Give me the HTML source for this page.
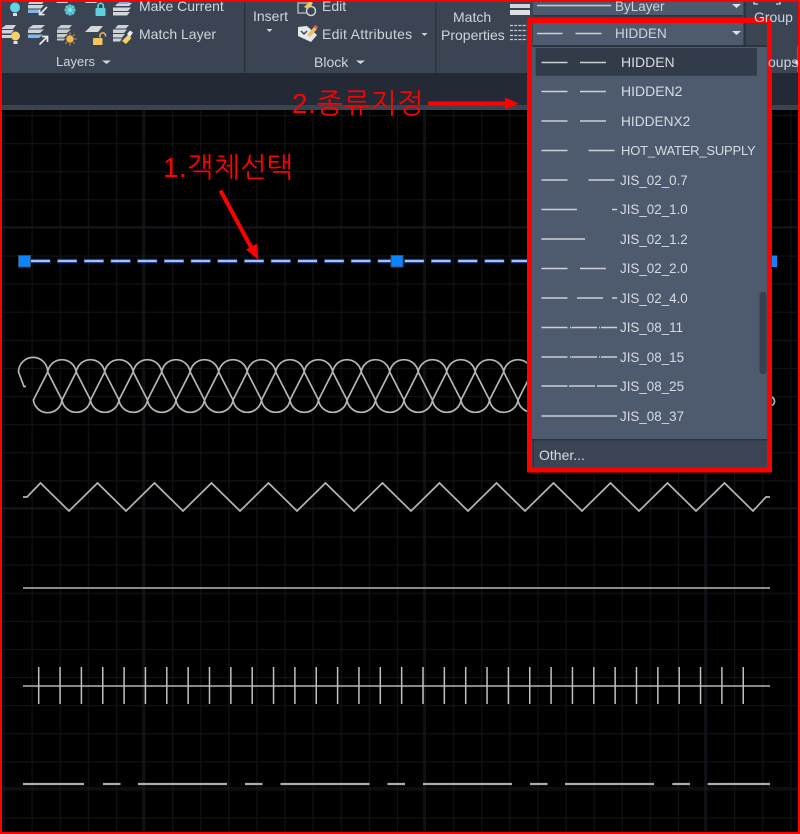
<!DOCTYPE html>
<html lang="ko"><head><meta charset="utf-8"><title>AutoCAD 선종류</title>
<style>
html,body{margin:0;padding:0;background:#000}
#a{position:relative;width:800px;height:834px;overflow:hidden;background:#000;font-family:"Liberation Sans",sans-serif;color:#d3d8df}
svg{position:absolute;left:0;top:0}
.t{position:absolute;white-space:nowrap;font-size:14px;line-height:18px;color:#cfd5dc}
.r{position:absolute;left:621px;white-space:nowrap;font-size:14px;line-height:18px;color:#d8dce2}
.j{left:620px;font-size:13.4px}
.k{position:absolute;white-space:nowrap;color:#f00;font-family:"Liberation Sans","NanumGothic","Noto Sans CJK KR",sans-serif;font-size:28px;line-height:30px;letter-spacing:.3px}
</style></head><body><div id="a">
<svg width="800" height="834" viewBox="0 0 800 834">
<defs>
<pattern id="g" patternUnits="userSpaceOnUse" x="3.500" y="115" width="28.100" height="28.100"><path d="M.5 0V28.100M0 .5H28.100" stroke="#111318" stroke-width="1.200" fill="none"/></pattern>
</defs>
<!-- ribbon -->
<rect width="800" height="73" fill="#3b4453"/>
<rect y="73" width="800" height="32" fill="#232a35"/>
<rect y="105" width="800" height="5" fill="#3a4350"/>
<rect x="244" width="1.500" height="73" fill="#2c3440"/>
<rect x="435" width="1.500" height="73" fill="#2c3440"/>
<rect x="744" width="2" height="73" fill="#2c3440"/>
<!-- canvas -->
<rect y="110" width="800" height="724" fill="#000"/>
<rect y="110" width="800" height="724" fill="url(#g)"/>
<path d="M143 110V834M424 110V834M705 110V834" stroke="#1e2029" stroke-width="1" fill="none"/>
<path d="M0 227H800M0 508H800M0 788H800" stroke="#1b1d25" stroke-width="1" fill="none"/>
<!-- ribbon icons row 1 -->
<g>
<circle cx="15" cy="7.500" r="5" fill="#62d4e6"/><rect x="13" y="13" width="4" height="3" fill="#d8dde2"/>
<path d="M31 0h14l-3 4H28zM28 5h16l-3 3.500H28z" fill="#d0d4d8"/><path d="M28 9.500h13l-3 3.500H28z" fill="#7fb7ea"/><path d="M47 7l-7 7M39.500 9.500V14.500h5" stroke="#e2e6ea" stroke-width="1.700" fill="none"/>
<path d="M59 0h12l-4 3H56z" fill="#d0d4d8"/>
<circle cx="70" cy="10" r="5.500" fill="#3ea8b5"/><path d="M64.500 10h11M70 4.500v11M66 6l8 8M74 6l-8 8" stroke="#8be0ea" stroke-width="1"/>
<path d="M88 0h12l-4 3H85z" fill="#d0d4d8"/>
<rect x="95.500" y="8" width="10" height="8" rx="1" fill="#5ed3de"/><path d="M98 8V6a2.700 2.700 0 0 1 5.400 0v2" stroke="#5ed3de" stroke-width="1.600" fill="none"/>
<path d="M118 3h14l-3 3h-14zM113 7.500h18l-3 3.500h-15zM113 12h17l-3 3.500h-14z" fill="#d4d8dc"/><path d="M117 4l5-4h10l-4 4z" fill="#69b6e6"/>
</g>
<!-- row 2 -->
<g>
<path d="M6 25h10l-3 4H2v-1zM2 30h12l-3 3.500H2zM2 35h10v3H2z" fill="#d0d4d8"/>
<circle cx="15.500" cy="36" r="4.500" fill="#f4cf6a"/><rect x="13.500" y="41" width="4" height="3" fill="#e0e3e6"/>
<path d="M33 25h12l-4 3.500H28zM28 29.500h16l-4 3.500H28z" fill="#d0d4d8"/><path d="M28 34.500h15l-4 3.500H28z" fill="#7fb7ea"/>
<path d="M39.500 44.500l7-7M42 36.500h5.500v5.500" stroke="#e8ebee" stroke-width="1.700" fill="none"/>
<path d="M61 25h11l-3 3.500H57zM57 29.500h14l-4 3.500H57zM57 34h11l-4 3.500h-7zM57 38.500h7v2h-7z" fill="#c8ccd0"/>
<circle cx="70" cy="39" r="3.700" fill="#eeb94e"/><path d="M70 32.500v2M70 43.500v2M63.500 39h2M74.500 39h2M65.500 34.500l1.300 1.300M73.200 42.200l1.300 1.300M74.500 34.500l-1.300 1.300M66.800 42.200l-1.300 1.300" stroke="#e3ae4e" stroke-width="1"/>
<path d="M91 26h12l-5 6H85z" fill="#d4d8dc"/>
<rect x="93" y="38" width="9.500" height="7" rx=".8" fill="#f0c75e"/><path d="M100 37.500v-2a2.800 2.800 0 0 1 5.500-.5v1.500" stroke="#e8bc58" stroke-width="1.500" fill="none"/>
<path d="M118 25h11l-3 3.500h-11zM113 29.500h14l-3 3.500h-11zM113 34h12l-3 3.500h-9zM113 38.500h9l-2 3h-7z" fill="#cfd3d8"/>
<path d="M122 41l6-6 3.500 3-5.500 6z" fill="#f4cf6a"/><path d="M127 34l3-3.500 3 2-3 4.500z" fill="#eceff2"/>
<!-- block icons -->
<path d="M298 3h13v10h-13z" fill="none" stroke="#aab0b8" stroke-width="1.500"/><circle cx="311" cy="11" r="4.500" fill="#3b4453" stroke="#cfd3d8" stroke-width="1.500"/><path d="M304 7l6-6 3 2-5 6z" fill="#f0c75e"/>
<path d="M298 27l9-1 10 9-6 7-13-6z" fill="#e6e9ec"/><path d="M301 31l3 3 3-3" stroke="#3b4453" stroke-width="1.500" fill="none"/><path d="M307 35l7-8 3 2-7 8z" fill="#eebf58"/><path d="M313.500 27l1.500-2 3 2-1.500 2z" fill="#e85c5c"/>
<!-- lineweight icons -->
<rect x="510" y="4" width="20" height="4" fill="#d2d6da"/><rect x="510" y="10" width="20" height="5" fill="#dde0e4"/>
<path d="M510 25.500h19M510 30.500h19M510 35.500h19M510 39.500h19" stroke="#c8ccd2" stroke-width="1.200" stroke-dasharray="3 1.200" fill="none"/>
<!-- group icon -->
<path d="M754 0v4h4M780 0v4h-4" stroke="#d4d8dc" stroke-width="1.300" fill="none"/>
<rect x="797" y="46" width="1" height="26" fill="#5f6a7a"/>
</g>
<!-- ribbon carets -->
<path d="M102 60.500h9l-4.500 3.500zM266.500 29h6l-3 3zM421.500 33h6l-3 3zM356 60.500h9l-4.500 3.500zM794 61h6v3h-3z" fill="#d0d5db"/>

<!-- drawing -->
<path d="M24 261H773" stroke="#2a5ac0" stroke-width="4.500" stroke-dasharray="20 6.700" stroke-dashoffset="-6.500" fill="none" opacity=".75"/>
<path d="M24 261H773" stroke="#a9c3ee" stroke-width="1.900" stroke-dasharray="19 7.700" stroke-dashoffset="-7" fill="none"/>
<rect x="18.500" y="255.500" width="12" height="11.500" fill="#0a84ff" stroke="#36506e"/>
<rect x="391" y="255.500" width="12" height="11.500" fill="#0a84ff" stroke="#36506e"/>
<rect x="768" y="255.500" width="9" height="11.500" fill="#0a84ff"/>
<g fill="none" stroke="#b5b5b5" stroke-width="1.700">
<path d="M26 386.500H24L18.500 372A14.600 14.600 0 0 1 47.700 372l-14.300 28a14.400 14.400 0 0 0 28.600 0l-14.300-28a14.400 14.400 0 0 1 28.500 0l-14.200 28a14.400 14.400 0 0 0 28.500 0l-14.300-28a14.400 14.400 0 0 1 28.500 0l-14.200 28a14.400 14.400 0 0 0 28.500 0l-14.300-28a14.400 14.400 0 0 1 28.500 0l-14.200 28a14.400 14.400 0 0 0 28.500 0l-14.300-28a14.400 14.400 0 0 1 28.500 0l-14.200 28a14.400 14.400 0 0 0 28.500 0l-14.300-28a14.400 14.400 0 0 1 28.500 0l-14.200 28a14.400 14.400 0 0 0 28.500 0l-14.300-28a14.400 14.400 0 0 1 28.500 0l-14.200 28a14.400 14.400 0 0 0 28.500 0l-14.300-28a14.400 14.400 0 0 1 28.500 0l-14.200 28a14.400 14.400 0 0 0 28.500 0l-14.300-28a14.400 14.400 0 0 1 28.500 0l-14.200 28a14.400 14.400 0 0 0 28.500 0l-14.300-28a14.400 14.400 0 0 1 28.500 0l-14.200 28a14.400 14.400 0 0 0 28.500 0l-14.300-28a14.400 14.400 0 0 1 28.500 0l-14.200 28a14.400 14.400 0 0 0 28.500 0l-14.300-28a14.400 14.400 0 0 1 28.500 0l-14.200 28a14.400 14.400 0 0 0 28.500 0l-14.300-28a14.400 14.400 0 0 1 28.500 0l-14.200 28a14.400 14.400 0 0 0 28.500 0l-14.300-28a14.400 14.400 0 0 1 28.500 0l-14.200 28a14.400 14.400 0 0 0 28.500 0l-14.300-28a14.400 14.400 0 0 1 28.500 0l-14.200 28a14.400 14.400 0 0 0 28.500 0l-14.300-28a14.400 14.400 0 0 1 28.500 0l-14.200 28a14.400 14.400 0 0 0 28.500 0l-14.300-28a14.400 14.400 0 0 1 28.500 0l-14.200 28a14.400 14.400 0 0 0 28.500 0l-14.300-28a14.400 14.400 0 0 1 28.500 0l-14.200 28a14.400 14.400 0 0 0 28.500 0l-14.300-28a14.400 14.400 0 0 1 28.500 0"/>
<path d="M772 397a5 5 0 0 1 2.500 4.500 5 5 0 0 1-2.500 4"/>
<path d="M23 497H27L40.500 483 69 511 97.500 483 126 511 154.500 483 183 511 211.500 483 240 511 268.500 483 297 511 325.500 483 354 511 382.500 483 411 511 439.500 483 468 511 496.500 483 525 511 553.500 483 582 511 610.500 483 639 511 667.500 483 696 511 724.500 483 753 511 766 497H770"/>
</g>
<path d="M23 588H770" stroke="#b8b8b8" stroke-width="1.600"/>
<path d="M23 686H770" stroke="#b4b4b4" stroke-width="1.500"/>
<path d="M38.700 667V704M60.050 667V704M81.400 667V704M102.750 667V704M124.100 667V704M145.450 667V704M166.800 667V704M188.150 667V704M209.500 667V704M230.850 667V704M252.200 667V704M273.550 667V704M294.900 667V704M316.250 667V704M337.600 667V704M358.950 667V704M380.300 667V704M401.650 667V704M423 667V704M444.350 667V704M465.700 667V704M487.050 667V704M508.400 667V704M529.750 667V704M551.100 667V704M572.450 667V704M593.800 667V704M615.150 667V704M636.500 667V704M657.850 667V704M679.200 667V704M700.550 667V704M721.900 667V704M743.250 667V704" stroke="#c0c0c0" stroke-width="1.500" fill="none"/>
<path d="M23 784H84M103 784H120.500M138 784H227M245 784H262.500M280.500 784H369.500M387.500 784H405M423 784H512M530 784H547.500M565 784H654M672.300 784H690M707.700 784H770" stroke="#adadad" stroke-width="2.200" fill="none"/>

<!-- combos -->
<rect x="533" y="0" width="210" height="15" fill="#4e5a6d"/>
<rect x="533" y="22" width="210" height="23" fill="#4e5a6d"/>
<rect x="533" y="15" width="210" height="1.500" fill="#2c3340"/>
<rect x="533" y="45" width="235" height="2" fill="#2c3340"/>
<!-- popup -->
<rect x="532" y="47" width="236" height="392" fill="#4e5a6d"/>
<rect x="535.700" y="48" width="221.300" height="27.700" fill="#323b4a"/>
<rect x="532" y="439" width="236" height="30" fill="#3b4453"/>
<rect x="532" y="439" width="236" height="1.500" fill="#2a303c"/>
<rect x="533" y="440" width="1" height="29" fill="#2a303c"/>
<rect x="759.500" y="292" width="7" height="82" rx="2.500" fill="#374050"/>
<g stroke="#ccd0d5" stroke-width="1.400" fill="none">
<path d="M537 5.500H611"/>
<path d="M537 33.500H562.500M575.500 33.500H601.500"/>
<path d="M541.500 62.500H567.500M580 62.500H606"/>
<path d="M541.500 91.500H567.500M580 91.500H606"/>
<path d="M541.500 121H567.500M580 121H606"/>
<path d="M541.500 150.500H567.500M588.500 150.500H614.500"/>
<path d="M541.500 180H567.500M588.500 180H614.500"/>
<path d="M541.500 209.500H577M612 209.500H617"/>
<path d="M541.500 239H585" stroke-width="2" stroke="#b2b6bb"/>
<path d="M541.500 268.500H567.500M580 268.500H606"/>
<path d="M541.500 298H567.500M577 298H603M612 298H617"/>
<path d="M541.500 327.500H567.500M570 327.500H571M571.500 327.500H597M599 327.500H600M601 327.500H617"/>
<path d="M541.500 357H567.500M570 357H571M571.500 357H597M599 357H600M601 357H617"/>
<path d="M541.500 386H567.500M569 386H595M597 386H617"/>
<path d="M541.500 416H617"/>
</g>
<!-- combo arrows -->
<path d="M732 4h9l-4.500 4zM732 31h9l-4.500 4z" fill="#dfe3e8"/>

<!-- red annotation -->
<rect x="529.500" y="20.500" width="240" height="449.500" fill="none" stroke="#f00" stroke-width="5"/>
<rect x="0" y="0" width="800" height="2" fill="#f00"/>
<rect x="0" y="0" width="2" height="834" fill="#f00"/>
<rect x="798" y="0" width="2" height="834" fill="#f00"/>
<rect x="0" y="832" width="800" height="2" fill="#f00"/>
<path d="M220.500 190.500L252 249" stroke="#f00" stroke-width="4" fill="none"/>
<path d="M258.500 260L246 249.500 257 243.500z" fill="#f00"/>
<path d="M428 103.500H507" stroke="#f00" stroke-width="4" fill="none"/>
<path d="M519 103.500L505 97.500V109.500z" fill="#f00"/>
</svg>

<div class="t" style="left:139px;top:-3px">Make Current</div>
<div class="t" style="left:139px;top:25px">Match Layer</div>
<div class="t" style="left:56px;top:53px;font-size:13px">Layers</div>
<div class="t" style="left:253px;top:7px">Insert</div>
<div class="t" style="left:322px;top:-3px">Edit</div>
<div class="t" style="left:322px;top:25px;letter-spacing:.27px">Edit Attributes</div>
<div class="t" style="left:314px;top:53px">Block</div>
<div class="t" style="left:453px;top:8px">Match</div>
<div class="t" style="left:441px;top:26px">Properties</div>
<div class="t" style="left:615px;top:-2px;font-size:13.500px">ByLayer</div>
<div class="t" style="left:615px;top:25px;font-size:13.500px">HIDDEN</div>
<div class="t" style="left:754px;top:8px">Group</div>
<div class="t" style="left:768px;top:53px">oups</div>

<div class="r" style="top:53px">HIDDEN</div>
<div class="r" style="top:82px">HIDDEN2</div>
<div class="r" style="top:113px;font-size:13.700px">HIDDENX2</div>
<div class="r" style="top:141.500px;font-size:13px;letter-spacing:-.2px">HOT_WATER_SUPPLY</div>
<div class="r j" style="top:172px">JIS_02_0.7</div>
<div class="r j" style="top:201px">JIS_02_1.0</div>
<div class="r j" style="top:231px">JIS_02_1.2</div>
<div class="r j" style="top:260px">JIS_02_2.0</div>
<div class="r j" style="top:290px">JIS_02_4.0</div>
<div class="r j" style="top:319px">JIS_08_11</div>
<div class="r j" style="top:349px">JIS_08_15</div>
<div class="r j" style="top:378px">JIS_08_25</div>
<div class="r j" style="top:408px">JIS_08_37</div>
<div class="r" style="left:539px;top:446px">Other...</div>

<div class="k" style="left:163px;top:153px">1.객체선택</div>
<div class="k" style="left:292px;top:89px;letter-spacing:.6px">2.종류지정</div>
</div></body></html>
